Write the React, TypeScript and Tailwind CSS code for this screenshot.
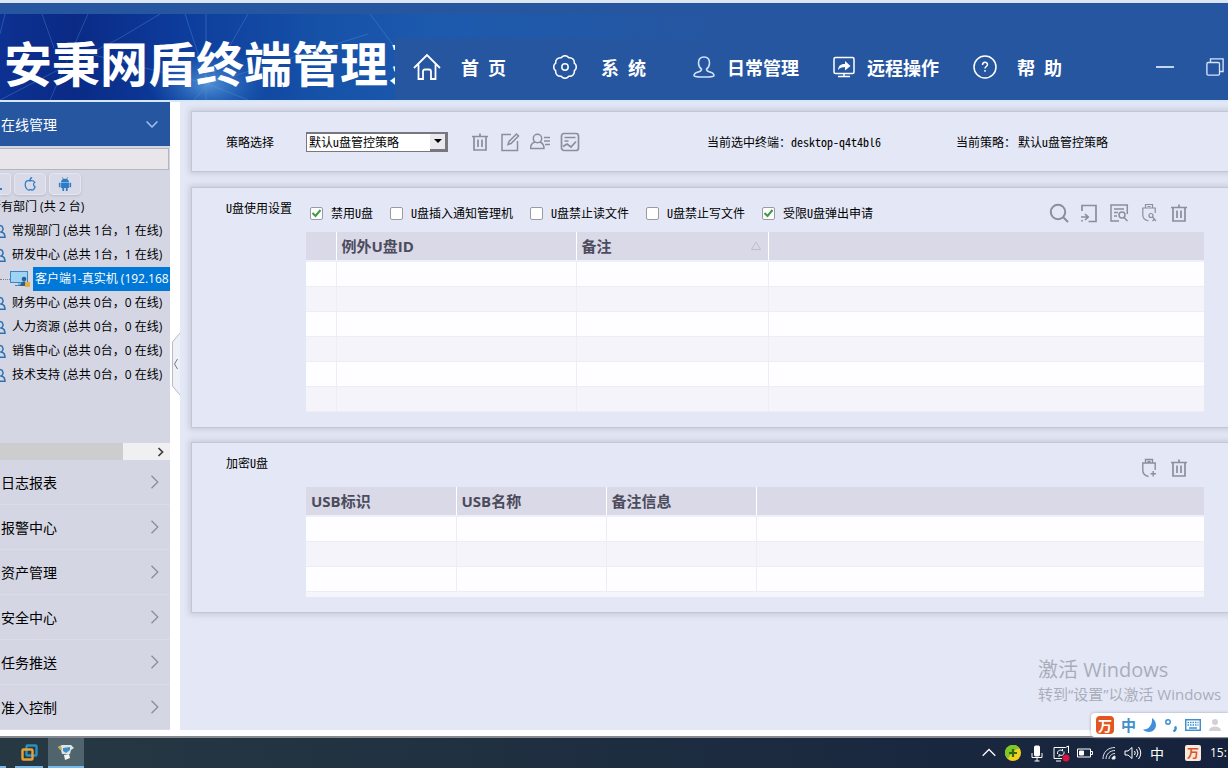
import type { ReactNode } from 'react';

const Icon = ({
    children,
    className = 'size-5 text-[#8d8d9b]',
    width = 1.5,
    box = '0 0 20 20',
}: {
    children: ReactNode;
    className?: string;
    width?: number;
    box?: string;
}) => (
    <svg
        viewBox={box}
        className={`shrink-0 ${className}`}
        fill="none"
        stroke="currentColor"
        strokeWidth={width}
        aria-hidden="true"
    >
        {children}
    </svg>
);

const TrashIcon = () => (
    <Icon width={1.7}>
        <path d="M2 4.5h16M10 1.5v3M4 4.5V18h12V4.5M8 7.5V15M12 7.5V15" />
    </Icon>
);

const EditIcon = () => (
    <Icon>
        <path d="M11 2.5H2V18.5h15.5V9" />
        <path d="M8 12.5l1-3L16.5 2l2 2L11 11.5z" />
    </Icon>
);

const UserListIcon = () => (
    <Icon>
        <circle cx="7.5" cy="6.5" r="4.2" />
        <path d="M5 10c-3 1-4.5 3-4.5 6.5h13.500c0-3.500-1.500-5.500-4-6.500M14 5.500h6M14 9h6M15 12.500h5" />
    </Icon>
);

const ReportIcon = () => (
    <Icon width={1.7}>
        <rect x="1.5" y="1.5" width="17" height="17" rx="2.5" />
        <path d="M4.500 5.500h11M4.500 9h4M3 14.500l4-2.500 4 3 5-5.500" />
    </Icon>
);

const SearchIcon = () => (
    <Icon width={2}>
        <circle cx="9" cy="9" r="7.2" />
        <path d="M14 14l5 5" />
    </Icon>
);

const ImportIcon = () => (
    <Icon width={1.7}>
        <path d="M3 8V2.500h14V18.500H9.500M3 18.500V17M2 14h7M6 11l3.200 3L6 17" />
    </Icon>
);

const LookupIcon = () => (
    <Icon>
        <path d="M18.300 11V2H2v16h8M5 6h10M5 9.500h4M5 13h3" />
        <circle cx="13" cy="12" r="3" />
        <path d="M15 14.500l3.500 3.500" />
    </Icon>
);

const UsbKeyIcon = () => (
    <Icon width={1.2}>
        <path d="M6.500 5V1.500h7V5M8.500 3.500h3M9.500 18C5.500 17 3.800 15 3.800 12V5h12.400v5" />
        <circle cx="12" cy="12.5" r="2" />
        <path d="M13.500 14l3.500 4M15.500 16l-2 2" />
    </Icon>
);

const UsbAddIcon = () => (
    <Icon width={1.4}>
        <path d="M6.500 5V1.500h7V5M8.500 3.500h3M9.500 18.500C5.500 17.500 3.800 15.500 3.800 12.500V5h12.400v7M14.200 13v5.500M11.500 15.800H17" />
    </Icon>
);

const NAV = [
    {
        label: '首 页',
        gap: 'gap-5',
        icon: (
            <Icon className="size-7 text-white" box="0 0 28 28" width={1.8}>
                <path d="M1 15L14 2l13 13M5.500 11.500V26H10v-7.500q0-2 2-2h4q2 0 2 2V26h4.500V11.500" />
            </Icon>
        ),
    },
    {
        label: '系 统',
        gap: 'gap-6',
        icon: (
            <Icon className="size-6 text-white" box="0 0 24 24">
                <path d="M8.170 2.760A4.600 4.600 0 0 1 15.830 2.760A4.600 4.600 0 0 1 21.240 8.170A4.600 4.600 0 0 1 21.240 15.830A4.600 4.600 0 0 1 15.830 21.240A4.600 4.600 0 0 1 8.170 21.240A4.600 4.600 0 0 1 2.760 15.830A4.600 4.600 0 0 1 2.760 8.170A4.600 4.600 0 0 1 8.170 2.760z" />
                <circle cx="12" cy="12" r="3.2" />
            </Icon>
        ),
    },
    {
        label: '日常管理',
        gap: 'gap-3',
        icon: (
            <Icon className="size-[22px] text-[#d5e4fb]" box="0 0 22 22">
                <path d="M11 1C7.500 1 5.500 3.500 5.500 7c0 3 1.500 5 3 6.200 0 2-1 2-3.500 2.800S1 18 1 19.500C1 21 5 21 11 21s10 0 10-1.500-1.500-2.700-4-3.500-3.500-.8-3.500-2.800C15 12 16.500 10 16.500 7c0-3.500-2-6-5.500-6z" />
            </Icon>
        ),
    },
    {
        label: '远程操作',
        gap: 'gap-3',
        icon: (
            <Icon className="size-[22px] text-white" box="0 0 22 22">
                <rect x="1" y="1.5" width="20" height="16" rx="1.5" />
                <path d="M11 18v2.500M5 20.500h12" />
                <path
                    d="M5 14c.5-4.500 3-6 7-6V5l5.500 5-5.500 4.500v-3.200c-3 0-5 .5-7 2.700z"
                    fill="currentColor"
                    stroke="none"
                />
            </Icon>
        ),
    },
    {
        label: '帮 助',
        gap: 'gap-5',
        icon: (
            <Icon className="size-6 text-white" box="0 0 24 24">
                <circle cx="12" cy="12" r="11" />
                <path d="M9.500 10c0-3.500 5-3.500 5-.5 0 2-2.500 2-2.500 4M12 15v1.800" />
            </Icon>
        ),
    },
];

const Header = () => (
    <header className="relative flex items-end overflow-hidden border-t-[3px] border-[#dce6f0] bg-[#2656a0]">
        <svg
            viewBox="0 0 720 86"
            className="absolute bottom-0 left-0 h-[86px] w-[720px]"
            aria-hidden="true"
        >
            <defs>
                <linearGradient id="banner">
                    <stop offset="0" stopColor="#0d3192" />
                    <stop offset=".1" stopColor="#0a2a85" />
                    <stop offset=".25" stopColor="#0d3c9c" />
                    <stop offset=".45" stopColor="#1652a8" />
                    <stop offset=".6" stopColor="#1c5aae" />
                    <stop offset="1" stopColor="#2656a0" />
                </linearGradient>
                <radialGradient id="glow">
                    <stop offset="0" stopColor="#6fb5ee" stopOpacity=".7" />
                    <stop offset="1" stopColor="#2f7fd0" stopOpacity="0" />
                </radialGradient>
            </defs>
            <rect width="720" height="86" fill="url(#banner)" />
            <ellipse cx="208" cy="70" rx="60" ry="36" fill="url(#glow)" />
            <path
                d="M5 0L0 20M42 0l12 34M88 0L50 86M160 0l-40 24M120 24L0 86M185 0l23 70M206 0v86M248 0l-40 70M208 70l40 16M208 70l-14 16M208 70l160-50M370 0l30 40M208 70L90 40"
                stroke="#5b9be0"
                strokeOpacity=".35"
                fill="none"
            />
        </svg>
        <h1 className="relative h-[97px] w-[395px] shrink-0 overflow-hidden pt-[23px] pl-1 text-5xl leading-[70px] font-bold whitespace-nowrap text-white">
            安秉网盾终端管理系
        </h1>
        <nav className="relative flex h-[62px] min-w-0 flex-1 items-center bg-[#2656a0] pb-1 pl-[18px]">
            {NAV.map((item) => (
                <a
                    key={item.label}
                    href="#"
                    className={`flex w-[140px] shrink-0 items-center font-['Noto_Sans_Mono_CJK_SC','Noto_Sans_CJK_SC',sans-serif] text-lg font-bold whitespace-nowrap text-white ${item.gap}`}
                >
                    {item.icon}
                    {item.label}
                </a>
            ))}
            <div className="ml-auto flex items-center gap-8 pr-1">
                <button type="button" aria-label="最小化">
                    <Icon className="size-[18px] text-[#d5e4fb]" width={2}>
                        <path d="M0 10h20" />
                    </Icon>
                </button>
                <button type="button" aria-label="还原">
                    <Icon className="size-[18px] text-[#d5e4fb]">
                        <rect x="1" y="5" width="14" height="14" rx="1.5" />
                        <path d="M5 5V1h14v14h-4" />
                    </Icon>
                </button>
            </div>
        </nav>
    </header>
);

const DEPARTMENTS = [
    { name: '常规部门', total: 1, online: 1 },
    { name: '研发中心', total: 1, online: 1, client: '客户端1-真实机 (192.168' },
    { name: '财务中心', total: 0, online: 0 },
    { name: '人力资源', total: 0, online: 0 },
    { name: '销售中心', total: 0, online: 0 },
    { name: '技术支持', total: 0, online: 0 },
];

const MENU = ['日志报表', '报警中心', '资产管理', '安全中心', '任务推送', '准入控制'];

const PLATFORM_BUTTON =
    'flex h-[22px] w-8 shrink-0 items-center justify-center rounded border border-[#e6e6f0] bg-[#d9dae7] shadow-sm';

const ClientIcon = () => (
    <svg viewBox="0 0 20 18" className="h-[18px] w-5 shrink-0" aria-hidden="true">
        <rect x=".5" y="1.5" width="17" height="11" fill="#9fd3f5" stroke="#3b86c4" />
        <path d="M5 15.500h8M9 13v2.500" stroke="#3b86c4" />
        <circle cx="14" cy="9" r="2.3" fill="#2b5f92" />
        <path d="M10 16c0-6 8-6 8 0z" fill="#2b5f92" />
        <rect x="15" y="12" width="5" height="5" fill="#e0b040" />
    </svg>
);

const Sidebar = () => (
    <aside className="flex w-[170px] shrink-0 flex-col overflow-hidden bg-[#d4d6e4] text-black">
        <button
            type="button"
            className="flex h-11 shrink-0 items-center justify-between bg-[#2656a0] pr-3 pl-px text-sm text-white"
        >
            在线管理
            <Icon className="size-3 text-[#a9c6f0]" width={2.4}>
                <path d="M1 6l9 9 9-9" />
            </Icon>
        </button>
        <input
            type="text"
            aria-label="搜索终端"
            className="mt-[2px] mr-px h-[22px] shrink-0 border border-l-0 border-[#b4b4bc] bg-[#e8e6ea] px-1 text-xs outline-none"
        />
        <div className="flex shrink-0 gap-[3px] pt-[3px]">
            <button
                type="button"
                aria-label="Windows"
                className="flex h-[22px] w-[11px] shrink-0 items-end rounded-r border border-l-0 border-[#e6e6f0] bg-[#d9dae7] pb-1 shadow-sm"
            >
                <span className="h-[2px] w-[2px] bg-[#2b7cc4]" />
            </button>
            <button type="button" aria-label="Apple" className={PLATFORM_BUTTON}>
                <Icon className="size-3.5 text-[#2b7cc4]" box="0 0 16 16" width={1.4}>
                    <path d="M8 4.500c-2-1-5.500-.5-5.500 4 0 3 2 6.500 4 6.500.8 0 1-.5 2-.5s1.300.5 2 .5c1.500 0 2.700-2 3.300-3.800-2.300-1-2.300-4-.3-5.200-1.500-2-3.700-2-5.500-1.500zM8 4c0-1.500 1-3 2.500-3.200" />
                </Icon>
            </button>
            <button type="button" aria-label="Android" className={PLATFORM_BUTTON}>
                <svg viewBox="0 0 16 16" className="size-3.5 fill-[#2b7cc4]" aria-hidden="true">
                    <path d="M3.500 6a4.500 4 0 0 1 9 0zM3.500 6.600h9v6h-9zM1 6.600h1.800v5H1zM13.200 6.600H15v5h-1.800zM5 12h2v4H5zM9 12h2v4H9z" />
                    <path d="M5 .5l1.200 2M11 .5l-1.200 2" stroke="#2b7cc4" />
                </svg>
            </button>
        </div>
        <ul className="flex-1 overflow-hidden font-['Open_Sans','Noto_Sans_CJK_SC',sans-serif] text-xs leading-6 whitespace-nowrap">
            <li className="-ml-[11px]">所有部门 (共 2 台)</li>
            {DEPARTMENTS.map((dept) => (
                <li key={dept.name}>
                    <div className="flex items-center gap-[6px]">
                        <Icon className="h-3.5 w-[6px] text-[#2b72b4]" box="8 0 6 14">
                            <path d="M6 1.500c6-1 6 5 3 6.500 3 .5 4 2.500 4 5.200H6" />
                        </Icon>
                        {dept.name} (总共 {dept.total}台，{dept.online} 在线)
                    </div>
                    {dept.client && (
                        <div className="flex items-center">
                            <span className="w-[10px] shrink-0 border-t border-dotted border-[#808080]" />
                            <ClientIcon />
                            <span className="ml-[3px] flex-1 bg-[#0078d7] pl-[2px] text-white">
                                {dept.client}
                            </span>
                        </div>
                    )}
                </li>
            ))}
        </ul>
        <div className="flex h-[17px] shrink-0 items-center justify-between bg-[#f0f0f2]">
            <div className="h-full w-[123px] bg-[#cdcdcf]" />
            <Icon className="mr-1 size-2.5 text-[#404040]" width={3.5}>
                <path d="M5 2l8 8-8 8" />
            </Icon>
        </div>
        <ul className="shrink-0 text-sm">
            {MENU.map((label) => (
                <li key={label}>
                    <button
                        type="button"
                        className="flex h-[45px] w-full items-center justify-between border-b border-[#dadce8] pr-2 pl-px"
                    >
                        {label}
                        <Icon className="size-3.5 text-[#8c8c98]" width={1.8}>
                            <path d="M5 1l9 9-9 9" />
                        </Icon>
                    </button>
                </li>
            ))}
        </ul>
    </aside>
);

const PANEL =
    '-mr-3 flex border border-[#c3c6d4] bg-[#e4e8f6] pr-[35px] pl-[34px] shadow-[0_0_6px_2px_#c8cbdb]';

const OPTIONS = [
    { label: '禁用U盘', checked: true },
    { label: 'U盘插入通知管理机', checked: false },
    { label: 'U盘禁止读文件', checked: false },
    { label: 'U盘禁止写文件', checked: false },
    { label: '受限U盘弹出申请', checked: true },
];

const CheckOption = ({ label, checked }: { label: string; checked: boolean }) => (
    <label className="flex items-center gap-2 whitespace-nowrap">
        <span className="grid">
            <input
                type="checkbox"
                defaultChecked={checked}
                className="peer col-start-1 row-start-1 size-[13px] appearance-none rounded-[2px] border border-[#9a9aa4] bg-white"
            />
            <svg
                viewBox="0 0 13 13"
                className="pointer-events-none invisible col-start-1 row-start-1 size-[13px] peer-checked:visible"
                aria-hidden="true"
            >
                <path d="M2.500 6L5.500 9l5-6" stroke="#3f9a46" strokeWidth="2" fill="none" />
            </svg>
        </span>
        {label}
    </label>
);

const TOOL_BUTTONS_TOP = [
    { name: '删除策略', icon: <TrashIcon /> },
    { name: '编辑策略', icon: <EditIcon /> },
    { name: '应用用户', icon: <UserListIcon /> },
    { name: '策略报表', icon: <ReportIcon /> },
];

const TOOL_BUTTONS_USB = [
    { name: '查找', icon: <SearchIcon /> },
    { name: '导入', icon: <ImportIcon /> },
    { name: '查看', icon: <LookupIcon /> },
    { name: '设置U盘', icon: <UsbKeyIcon /> },
    { name: '删除', icon: <TrashIcon /> },
];

const TOOL_BUTTONS_ENCRYPTED = [
    { name: '添加加密U盘', icon: <UsbAddIcon /> },
    { name: '删除加密U盘', icon: <TrashIcon /> },
];

const Toolbar = ({ items }: { items: { name: string; icon: ReactNode }[] }) => (
    <div className="flex shrink-0 gap-2.5">
        {items.map((item) => (
            <button key={item.name} type="button" aria-label={item.name}>
                {item.icon}
            </button>
        ))}
    </div>
);

type Column = { title: string; width: string; sorted?: boolean };

const USB_COLUMNS: Column[] = [
    { title: '', width: 'w-[30px]' },
    { title: '例外U盘ID', width: 'w-[240px]' },
    { title: '备注', width: 'w-[192px]', sorted: true },
    { title: '', width: '' },
];

const ENCRYPTED_COLUMNS: Column[] = [
    { title: 'USB标识', width: 'w-[150px]' },
    { title: 'USB名称', width: 'w-[150px]' },
    { title: '备注信息', width: 'w-[150px]' },
    { title: '', width: '' },
];

const DataTable = ({ columns, rows }: { columns: Column[]; rows: number }) => (
    <table className="w-full table-fixed border-collapse bg-[#fefdff] text-left font-['Open_Sans','Noto_Sans_CJK_SC',sans-serif] text-[15px] text-[#4c4c5c]">
        <thead>
            <tr className="h-[29px] border-b-2 border-[#eeeff8] bg-[#d9d9e8]">
                {columns.map((column, index) => (
                    <th
                        key={index}
                        className={`border-r border-white p-0 pl-[5px] leading-5 font-bold last:border-r-0 ${column.width}`}
                    >
                        <div className="flex items-center justify-between pr-[7px]">
                            {column.title}
                            {column.sorted && (
                                <Icon className="size-2.5 text-[#b4b4c2]">
                                    <path d="M1 17h18L10 2z" />
                                </Icon>
                            )}
                        </div>
                    </th>
                ))}
            </tr>
        </thead>
        <tbody>
            {Array.from({ length: rows }, (_, row) => (
                <tr key={row} className="h-[25px] border-b border-[#ededf3] even:bg-[#f5f4fa]">
                    {columns.map((_column, index) => (
                        <td key={index} className="border-r border-[#ededf3] p-0 last:border-r-0" />
                    ))}
                </tr>
            ))}
        </tbody>
    </table>
);

const Main = () => (
    <main className="min-w-0 flex-1 overflow-hidden bg-[#e4e8f6] pt-[9px] pl-[11px] font-['Noto_Sans_Mono_CJK_SC','Noto_Sans_CJK_SC',sans-serif] text-xs text-black">
        <section className={`${PANEL} h-[61px] items-center whitespace-nowrap`}>
            <label htmlFor="policy" className="w-20 shrink-0">
                策略选择
            </label>
            <div className="relative w-[142px] shrink-0">
                <select
                    id="policy"
                    className="h-5 w-full appearance-none border border-t-2 border-[#77777f] bg-white pl-[2px] leading-4"
                >
                    <option>默认u盘管控策略</option>
                </select>
                <span className="pointer-events-none absolute top-[2px] right-px flex h-[17px] w-[17px] items-center justify-center border-r-2 border-b-2 border-[#77777f] bg-[#e9e9ee]">
                    <svg viewBox="0 0 8 4" className="h-1 w-2" aria-hidden="true">
                        <path d="M0 0h8L4 4z" />
                    </svg>
                </span>
            </div>
            <div className="ml-[22px]">
                <Toolbar items={TOOL_BUTTONS_TOP} />
            </div>
            <p className="ml-[127px]">当前选中终端：desktop-q4t4bl6</p>
            <p className="ml-[75px] flex gap-[2px]">
                <span>当前策略：</span>
                <span>默认u盘管控策略</span>
            </p>
        </section>

        <section className={`${PANEL} mt-[15px] h-[241px]`}>
            <h2 className="w-20 shrink-0 pt-3">U盘使用设置</h2>
            <div className="min-w-0 flex-1 pt-[15px]">
                <div className="mb-[9px] flex items-center justify-between pr-[15px] pl-1">
                    <div className="flex gap-[17px]">
                        {OPTIONS.map((option) => (
                            <CheckOption key={option.label} {...option} />
                        ))}
                    </div>
                    <Toolbar items={TOOL_BUTTONS_USB} />
                </div>
                <DataTable columns={USB_COLUMNS} rows={6} />
            </div>
        </section>

        <section className={`${PANEL} mt-[14px] h-[171px]`}>
            <h2 className="w-20 shrink-0 pt-3">加密U盘</h2>
            <div className="min-w-0 flex-1 pt-[15px]">
                <div className="mb-[9px] flex justify-end pr-[15px]">
                    <Toolbar items={TOOL_BUTTONS_ENCRYPTED} />
                </div>
                <DataTable columns={ENCRYPTED_COLUMNS} rows={3} />
                <div className="h-[5px] bg-[#f5f6fb]" />
            </div>
        </section>
    </main>
);

const ImeBar = () => (
    <div className="absolute right-0 bottom-[31px] flex h-6 w-[137px] items-center gap-[7px] rounded-l bg-white pl-[5px] text-[#3f8fcb] shadow-[0_0_3px_#a0a0b0]">
        <span className="flex size-[18px] shrink-0 items-center justify-center rounded-sm bg-[#e4561f] text-sm leading-4 font-bold text-white">
            万
        </span>
        <span className="text-[15px] leading-5 font-bold">中</span>
        <svg viewBox="0 0 14 14" className="size-3.5 shrink-0 fill-[#3f8fdb]" aria-hidden="true">
            <path d="M9 0c7 5 4 14-3 14-2.500 0-5-1.200-6-2.500C6 12 9.500 7 9 0z" />
        </svg>
        <Icon className="size-3.5" box="0 0 14 14">
            <circle cx="4" cy="4" r="2.2" />
            <path d="M11 8.500c1.500 2 0 4-1.500 5" strokeWidth="2.5" />
        </Icon>
        <Icon className="h-3 w-4" box="0 0 16 12">
            <rect x=".7" y=".7" width="14.6" height="10.6" />
            <path d="M2.500 3.500h11M2.500 6h11" strokeDasharray="1.5 1" />
            <path d="M4 9h8" />
        </Icon>
        <svg viewBox="0 0 14 14" className="size-3.5 shrink-0 fill-[#d3d0d6]" aria-hidden="true">
            <circle cx="7" cy="4" r="3" />
            <path d="M1 13c0-6 12-6 12 0z" />
        </svg>
    </div>
);

const TRAY = [
    <Icon className="size-3.5" width={1.8}>
        <path d="M1 14l9-9 9 9" />
    </Icon>,
    <svg viewBox="0 0 16 16" className="size-4">
        <circle cx="8" cy="8" r="8" fill="#f2d21c" />
        <path d="M0 8a8 8 0 0 1 15-4C10 2 4 12 3 14a8 8 0 0 1-3-6z" fill="#7cc62a" />
        <path d="M8 4v8M4 8h8" stroke="#2c6a14" strokeWidth="2.2" />
    </svg>,
    <svg viewBox="0 0 12 17" className="h-[17px] w-3" fill="none" stroke="#fff">
        <rect x="3.5" y="1" width="5" height="10" rx="1" fill="#fff" />
        <path d="M1 8v4.500h10V8M6 12.500V16M3.500 16h5" />
    </svg>,
    <svg viewBox="0 0 17 17" className="size-[17px]" fill="none" stroke="#fff">
        <path d="M15.500 8V1l-3 1.500H1v11h8M4.500 9c-.5-3.500 3-5 5-3V4M11 6.500c.5 3.500-2.500 5-5 3V12M3 16h5" />
        <circle cx="13" cy="13" r="3.5" fill="#d8143c" stroke="none" />
    </svg>,
    <svg viewBox="0 0 16 10" className="h-2.5 w-4" fill="none" stroke="#fff">
        <path d="M.5 1h13v8H.5zM14 3.500h1.500v3H14" />
        <path d="M2.500 3h4v4h-4z" fill="#fff" />
    </svg>,
    <svg viewBox="0 0 14 14" className="size-3.5" fill="none" stroke="#dfe4ea">
        <path d="M1 13C1 6 6 1.500 13 1.500M4 13c0-5 4-8.500 9-8.500M7 13c0-3 3-5.500 6-5.500" />
        <path d="M10 13c0-2 1.500-3 3-3v3z" fill="#fff" />
    </svg>,
    <svg viewBox="0 0 18 14" className="h-3.5 w-[18px]" fill="none" stroke="#fff">
        <path d="M1 5v4h3l4 3.500v-11L4 5zM10.500 5q1.500 2 0 4M12.500 3q3 4 0 8M14.500 1q4.500 6 0 12" />
    </svg>,
    <span className="text-sm">中</span>,
];

const Taskbar = () => (
    <footer className="flex h-8 shrink-0 items-center justify-between border-t-2 border-[#87898f] bg-linear-to-r from-[#263943] to-[#16223d] text-white">
        <div className="flex h-full">
            <span className="mr-[9px] w-[6px] border-b-2 border-[#76b9ed]" />
            <button
                type="button"
                aria-label="VMware"
                className="mr-[5px] flex w-7 items-center justify-center border-b-2 border-[#76b9ed]"
            >
                <svg viewBox="0 0 17 17" className="size-[17px]" fill="none" strokeWidth="2.4">
                    <rect x="5.5" y="1.5" width="10" height="10" rx="1" stroke="#2b8fc4" />
                    <rect x="1.5" y="5.5" width="10" height="10" rx="1" stroke="#e8a233" />
                </svg>
            </button>
            <button
                type="button"
                aria-label="安秉网盾"
                className="flex w-9 items-center justify-center border-b-2 border-[#76b9ed] bg-[#50646e]"
            >
                <svg viewBox="0 0 18 16" className="h-4 w-[18px]">
                    <path d="M1 3l4-2 9 0 3 3-3 2-1 4H5L4 6z" fill="#dfe6e0" />
                    <path d="M6 4l7-1 0 3-4 3-3-2z" fill="#3d8fc8" />
                    <path d="M1 3l3-1 1 4H3z" fill="#c9a64a" />
                    <path d="M7 11l5-1 1 4-5 2z" fill="#f4f6f2" />
                </svg>
            </button>
        </div>
        <div className="flex items-center whitespace-nowrap">
            {TRAY.map((item, index) => (
                <span key={index} className="flex w-6 items-center justify-center">
                    {item}
                </span>
            ))}
            <span className="mr-[9px] ml-4 flex size-4 items-center justify-center rounded-[2px] bg-[#fbe9dc] text-xs leading-4 font-bold text-[#d8532a]">
                万
            </span>
            <time className="w-[18px] font-['Open_Sans',sans-serif] text-xs">15:</time>
        </div>
    </footer>
);

const App = () => (
    <div className="relative flex min-h-screen flex-col overflow-hidden bg-white font-['Noto_Sans_CJK_SC',sans-serif]">
        <Header />
        <div className="flex flex-1 border-t-2 border-b-[6px] border-t-[#d3e7fd] border-b-white">
            <Sidebar />
            <div className="flex w-[10px] shrink-0 items-center bg-white">
                <button type="button" aria-label="收起侧栏" className="-mt-[104px]">
                    <svg
                        viewBox="0 0 10 64"
                        className="h-16 w-[10px]"
                        fill="#eef0f8"
                        stroke="#b8bac6"
                        aria-hidden="true"
                    >
                        <path d="M10 1L2.500 10v44l7.500 9" />
                        <path d="M7.500 27L4.500 32l3 5" stroke="#77777f" fill="none" />
                    </svg>
                </button>
            </div>
            <Main />
        </div>
        <div className="pointer-events-none absolute right-0 bottom-16 w-[190px] font-['Open_Sans','Noto_Sans_CJK_SC',sans-serif] whitespace-nowrap text-[#a9adbb]">
            <p className="text-xl leading-7">激活 Windows</p>
            <p className="text-[15px] leading-5">转到“设置”以激活 Windows</p>
        </div>
        <ImeBar />
        <Taskbar />
    </div>
);

export default App;
